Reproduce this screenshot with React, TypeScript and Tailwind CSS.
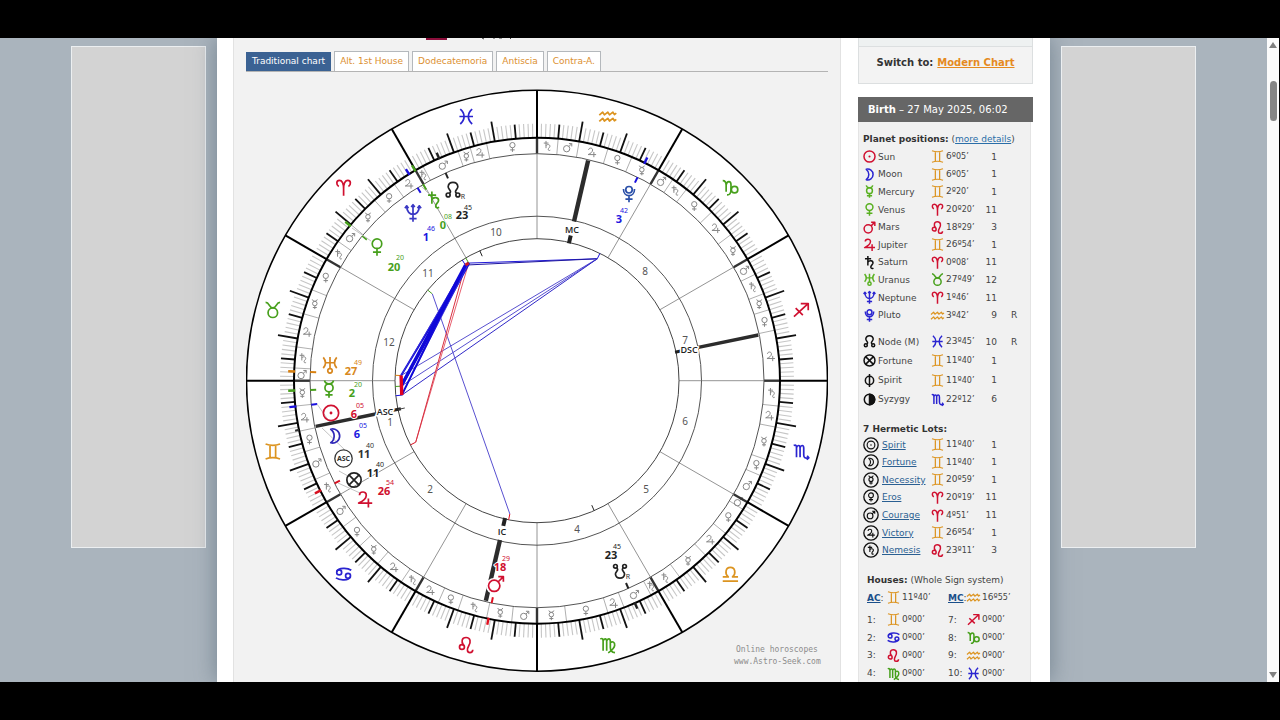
import React from "react";

const RED = "#d01030";
const GREEN = "#47a01c";
const ORANGE = "#dc9420";
const BLUE = "#2a24d0";
const BLACK = "#222222";

type Shape = { d?: string; c?: [number, number, number][]; dots?: [number, number, number][]; fill?: string };

const SHAPES: Record<string, Shape> = {
  sun: { c: [[10, 10, 8.5]], dots: [[10, 10, 1.6]] },
  moon: { d: "M5 2A8.3 8.3 0 1 1 5 18A10 10 0 0 0 5 2Z" },
  mercury: { c: [[10, 8.7, 4.5]], d: "M5 .5Q6 4.2 10 4.2Q14 4.2 15 .5M10 13.2V19.8M6 16.6H14" },
  venus: { c: [[10, 6.3, 5.3]], d: "M10 11.6V19.8M5.5 15.8H14.5" },
  mars: { c: [[8, 12, 6.3]], d: "M12.5 7.5L18 2M12.5 1.8H18.2V7.5" },
  jupiter: { d: "M3.5 5.5C3.5 .8 11.5 .3 11.5 5.5C11.5 9.5 7.5 12.5 2.5 14.8H18.5M14 9.5V20" },
  saturn: { d: "M7.5 0V14.5M3 4.3H12.5M7.5 9.5C9.5 6 15.8 6.5 15.3 11C14.9 13.5 12 14.3 12 17C12 19.2 14 19.8 16 18.5" },
  uranus: { c: [[10, 16.5, 2.5]], d: "M10 1V14M2.5 1.5Q7.5 7.5 2.5 13.5M17.5 1.5Q12.5 7.5 17.5 13.5M5 7.5H15" },
  neptune: { d: "M10 .5V19.8M3 2.5C3 14.5 17 14.5 17 2.5M6 16.2H14M1 4.7L3 2L5 4.7M15 4.7L17 2L19 4.7M8 3.3L10 .8L12 3.3" },
  pluto: { c: [[10, 5, 3.8]], d: "M3.5 4C3.5 14.5 16.5 14.5 16.5 4M10 11.9V19.8M5.8 16H14.2" },
  node: { c: [[4.3, 15.8, 2.3], [15.7, 15.8, 2.3]], d: "M5.8 13.8C9.5 11.5 4 9 4.3 6C4.7 2.5 7.5 1 10 1C12.5 1 15.3 2.5 15.7 6C16 9 10.5 11.5 14.2 13.8" },
  southNode: { c: [[4.3, 4.2, 2.3], [15.7, 4.2, 2.3]], d: "M5.8 6.2C9.5 8.5 4 11 4.3 14C4.7 17.5 7.5 19 10 19C12.5 19 15.3 17.5 15.7 14C16 11 10.5 8.5 14.2 6.2" },
  fortune: { c: [[10, 10, 8.4]], d: "M4 4L16 16M16 4L4 16" },
  spirit: { c: [[10, 10, 6.4]], d: "M10 0V20" },
  syzygy: { c: [[10, 10, 8]], fill: "M10 2A8 8 0 0 1 10 18Z" },
  aries: { d: "M4.3 9C1 7 1.3 1.8 5 1.8C8.5 1.8 10 7 10 12V19.8M15.7 9C19 7 18.7 1.8 15 1.8C11.5 1.8 10 7 10 12" },
  taurus: { c: [[10, 13.3, 5.6]], d: "M1.5 1.2C6.5 1.2 5 7.7 10 7.7C15 7.7 13.5 1.2 18.5 1.2" },
  gemini: { d: "M1.5 1.2Q10 4.2 18.5 1.2M1.5 18.8Q10 15.8 18.5 18.8M6.7 2.7V17.3M13.3 2.7V17.3" },
  cancer: { c: [[4.8, 8, 2.9], [15.2, 12, 2.9]], d: "M1.9 7C4 2.2 14.5 2.2 19 5.5M18.1 13C16 17.8 5.5 17.8 1 14.5" },
  leo: { c: [[5, 12.5, 2.9]], d: "M6.8 10.3C4 6.5 4.5 1.3 9.8 1.3C15.5 1.3 15.5 7 13 11C10.5 15.3 11 19 14.3 19C16.5 19 17.7 17.5 17.7 15.7" },
  virgo: { d: "M1.2 3C4 1.5 4.5 3.5 4.5 6V16.8M4.5 5.5C5.5 2 8.7 2 8.7 6V16.8M8.7 5.5C9.7 2 13 2 13 6V13C13 16.5 14.5 18.7 18.5 19.2M13 7.3C15.5 5.3 18.5 6.8 18.1 10.5C17.5 14.7 13.5 17.3 10.5 19.4" },
  libra: { d: "M1 18.3H19M1 13.3H7.5C3 9.5 4.3 2.2 10 2.2C15.7 2.2 17 9.5 12.5 13.3H19" },
  scorpio: { d: "M1.2 3C4 1.5 4.5 3.5 4.5 6V16.8M4.5 5.5C5.5 2 8.7 2 8.7 6V16.8M8.7 5.5C9.7 2 13 2 13 6V14C13 17.8 15 18.3 18.5 17.7M17 15L19 17.5L16.5 19.7" },
  sagittarius: { d: "M1.5 18L17.8 2.8M9.5 2.5H18.3V10.5M3.5 8L12 16" },
  capricorn: { c: [[14.9, 12.8, 3.8]], d: "M1 2.2C4.5 2.2 5 5 5 8V15.3M5 7C6 2 10.7 2 10.7 7V13C10.7 17.2 9 19.2 6 19" },
  aquarius: { d: "M0 8.5L4 4.8L6 8L10 4.8L12 8L16 4.8L17.8 7.8L20 6M0 15.8L4 12.1L6 15.3L10 12.1L12 15.3L16 12.1L17.8 15.1L20 13.3" },
  pisces: { d: "M3 1.2C9 6.5 9 13.5 3 18.8M17 1.2C11 6.5 11 13.5 17 18.8M2 10H18" },
};

const SIGN_COLORS: Record<string, string> = {
  aries: RED, leo: RED, sagittarius: RED,
  taurus: GREEN, virgo: GREEN, capricorn: GREEN,
  gemini: ORANGE, libra: ORANGE, aquarius: ORANGE,
  cancer: BLUE, scorpio: BLUE, pisces: BLUE,
};

function Strokes({ name, color, width }: { name: string; color: string; width: number }) {
  const s = SHAPES[name];
  return (
    <g stroke={color} strokeWidth={width} fill="none" strokeLinejoin="round">
      {s.c?.map(([x, y, r], i) => <circle key={i} cx={x} cy={y} r={r} />)}
      {s.dots?.map(([x, y, r], i) => <circle key={i} cx={x} cy={y} r={r} fill={color} stroke="none" />)}
      {s.d && <path d={s.d} />}
      {s.fill && <path d={s.fill} fill={color} />}
    </g>
  );
}

function Icon({ name, color }: { name: string; color: string }) {
  return (
    <svg viewBox="0 0 20 20" className="block size-[13px] overflow-visible" aria-hidden="true">
      <Strokes name={name} color={color} width={name === "gemini" || name === "aquarius" ? 1.9 : 2.3} />
    </svg>
  );
}

function RingIcon({ name }: { name: string }) {
  return (
    <svg viewBox="0 0 30 30" className="block size-[16px]" aria-hidden="true">
      <circle cx="15" cy="15" r="13.4" fill="none" stroke="#111" strokeWidth="2.5" />
      <g transform="translate(6.5 6.5) scale(.85)">
        <Strokes name={name} color="#111" width={2.5} />
      </g>
    </svg>
  );
}

/* ---------- chart wheel ---------- */

const CX = 537;
const CY = 380.7;
const R_OUT = 290.5;
const R_SIGN = 243;
const R_TERM = 227;
const R_HOUSE = 164.5;
const R_IN = 142;
const R_ASPECT = 136;

function at(deg: number, r: number): [number, number] {
  const a = (deg * Math.PI) / 180;
  return [CX + r * Math.cos(a), CY - r * Math.sin(a)];
}

function Ray({ deg, from, to, color, width }: { deg: number; from: number; to: number; color: string; width: number }) {
  const [x1, y1] = at(deg, from);
  const [x2, y2] = at(deg, to);
  return <line x1={x1} y1={y1} x2={x2} y2={y2} stroke={color} strokeWidth={width} />;
}

function ChartGlyph({ name, x, y, size, color, width }: { name: string; x: number; y: number; size: number; color: string; width: number }) {
  const k = size / 20;
  return (
    <g transform={`translate(${x - size / 2} ${y - size / 2}) scale(${k})`}>
      <Strokes name={name} color={color} width={width / k} />
    </g>
  );
}

const SIGNS = ["gemini", "cancer", "leo", "virgo", "libra", "scorpio", "sagittarius", "capricorn", "aquarius", "pisces", "aries", "taurus"];

const TERMS: Record<string, [string, number][]> = {
  aries: [["jupiter", 6], ["venus", 12], ["mercury", 20], ["mars", 25], ["saturn", 30]],
  taurus: [["venus", 8], ["mercury", 14], ["jupiter", 22], ["saturn", 27], ["mars", 30]],
  gemini: [["mercury", 6], ["jupiter", 12], ["venus", 17], ["mars", 24], ["saturn", 30]],
  cancer: [["mars", 7], ["venus", 13], ["mercury", 19], ["jupiter", 26], ["saturn", 30]],
  leo: [["jupiter", 6], ["venus", 11], ["saturn", 18], ["mercury", 24], ["mars", 30]],
  virgo: [["mercury", 7], ["venus", 17], ["jupiter", 21], ["mars", 28], ["saturn", 30]],
  libra: [["saturn", 6], ["mercury", 14], ["jupiter", 21], ["venus", 28], ["mars", 30]],
  scorpio: [["mars", 7], ["venus", 11], ["mercury", 19], ["jupiter", 24], ["saturn", 30]],
  sagittarius: [["jupiter", 12], ["venus", 17], ["mercury", 21], ["saturn", 26], ["mars", 30]],
  capricorn: [["mercury", 7], ["jupiter", 14], ["venus", 22], ["saturn", 26], ["mars", 30]],
  aquarius: [["mercury", 7], ["venus", 13], ["jupiter", 20], ["mars", 25], ["saturn", 30]],
  pisces: [["venus", 12], ["jupiter", 16], ["mercury", 19], ["mars", 28], ["saturn", 30]],
};

const POS = { saturn: 120.13, neptune: 121.77, venus: 140.33, uranus: 177.82, mercury: 182.33, sun: 186.08, jupiter: 206.9, mars: 258.48, southNode: 293.75, pluto: 63.7, node: 113.75 };

const ASPECTS: [number, number, string, number][] = [
  [POS.saturn, POS.pluto, "#2018d8", 1],
  [POS.neptune, POS.pluto, "#2018a0", 1],
  [POS.uranus, POS.pluto, "#5850d0", 1],
  [POS.mercury, POS.pluto, "#5850d0", 1],
  [POS.sun, POS.pluto, "#3028c8", 1],
  [POS.venus, POS.mars, "#5850d0", 1],
  [POS.saturn, POS.jupiter, "#e86070", 1],
  [POS.neptune, POS.jupiter, "#d83040", 1],
  [POS.saturn, POS.uranus, "#1008d8", 2],
  [POS.neptune, POS.uranus, "#3830d8", 1],
  [POS.saturn, POS.mercury, "#1008d8", 3],
  [POS.neptune, POS.mercury, "#1008d8", 3],
  [POS.saturn, POS.sun, "#3830d8", 1],
  [POS.neptune, POS.sun, "#1008d8", 2],
  [POS.saturn, POS.neptune, "#c81828", 3],
  [POS.uranus, POS.sun, "#e00020", 3.4],
];

const MARKERS: [number, string][] = [
  [POS.saturn, GREEN], [POS.neptune, "#1a10e0"], [POS.venus, GREEN], [POS.uranus, "#d88010"],
  [POS.mercury, GREEN], [POS.sun, "#1a10e0"], [POS.jupiter, "#d81020"], [POS.mars, "#e01020"],
  [POS.pluto, "#1a10e0"], [POS.node, BLACK], [POS.southNode, BLACK],
];

type Placed = { name: string; x: number; y: number; size: number; color: string; deg: string; dx: number; dy: number; min: string; mx: number; my: number; numColor?: string };

const PLACED: Placed[] = [
  { name: "node", x: 453, y: 190, size: 17, color: BLACK, deg: "23", dx: 462, dy: 219, min: "45", mx: 468, my: 210 },
  { name: "saturn", x: 434, y: 200, size: 17, color: GREEN, deg: "0", dx: 443, dy: 229, min: "08", mx: 448, my: 219 },
  { name: "neptune", x: 413, y: 213, size: 18, color: "#3a38c4", deg: "1", dx: 426, dy: 241, min: "46", mx: 431, my: 231, numColor: "#2018e0" },
  { name: "venus", x: 377, y: 247, size: 18, color: GREEN, deg: "20", dx: 394, dy: 271, min: "20", mx: 400, my: 260 },
  { name: "pluto", x: 629, y: 194, size: 17, color: "#2a4fa8", deg: "3", dx: 619, dy: 223, min: "42", mx: 624, my: 213, numColor: "#2018e0" },
  { name: "uranus", x: 330, y: 365, size: 18, color: "#d88820", deg: "27", dx: 351, dy: 375, min: "49", mx: 358, my: 365 },
  { name: "mercury", x: 329, y: 389, size: 18, color: GREEN, deg: "2", dx: 352, dy: 397, min: "20", mx: 358, my: 387 },
  { name: "sun", x: 331, y: 413, size: 18, color: RED, deg: "6", dx: 354, dy: 418, min: "05", mx: 360, my: 408 },
  { name: "moon", x: 335, y: 436, size: 17, color: "#3028b8", deg: "6", dx: 357, dy: 438, min: "05", mx: 363, my: 428, numColor: "#2018e0" },
  { name: "fortune", x: 354, y: 480, size: 17, color: BLACK, deg: "11", dx: 373, dy: 477, min: "40", mx: 380, my: 467 },
  { name: "jupiter", x: 365, y: 499, size: 17, color: RED, deg: "26", dx: 384, dy: 495, min: "54", mx: 390, my: 485 },
  { name: "mars", x: 496, y: 584, size: 18, color: RED, deg: "18", dx: 500, dy: 571, min: "29", mx: 506, my: 561 },
  { name: "southNode", x: 620, y: 571, size: 16, color: BLACK, deg: "23", dx: 611, dy: 559, min: "45", mx: 617, my: 549 },
];

const HOUSES: [string, number, number][] = [
  ["10", 496, 236], ["11", 428, 277], ["12", 389, 346], ["1", 390, 426], ["2", 430, 493],
  ["4", 577, 533], ["5", 646, 493], ["6", 685, 425], ["7", 685, 344], ["8", 645, 275],
];

const AXES: { label: string; deg: number; x: number; y: number }[] = [
  { label: "ASC", deg: 191.67, x: 385, y: 415 },
  { label: "DSC", deg: 11.67, x: 689, y: 353 },
  { label: "MC", deg: 76.92, x: 572, y: 233 },
  { label: "IC", deg: 256.92, x: 502, y: 535 },
];

function Wheel() {
  const degrees = Array.from({ length: 360 }, (_, i) => i);
  return (
    <svg viewBox="246 72 582 610" className="block w-full" role="img" aria-label="Traditional birth chart">
      <circle cx={CX} cy={CY} r={R_OUT} fill="#fff" />
      {degrees.filter((d) => d % 5 !== 0).map((d) => (
        <Ray key={d} deg={d} from={R_SIGN} to={257} color="#c6c6c6" width={1.1} />
      ))}
      {degrees.filter((d) => d % 5 === 0 && d % 30 !== 0).map((d) => (
        <Ray key={d} deg={d} from={R_SIGN} to={d % 10 === 0 ? 263 : 257} color="#111" width={1.8} />
      ))}
      {SIGNS.map((sign, i) => {
        const start = 180 + i * 30;
        const [gx, gy] = at(start + 15, 273.5);
        return (
          <g key={sign}>
            <Ray deg={start} from={R_SIGN} to={R_OUT} color="#000" width={2} />
            <Ray deg={start} from={R_TERM} to={R_SIGN} color="#333" width={2.4} />
            <Ray deg={start} from={R_IN} to={R_TERM} color="#949494" width={1} />
            <ChartGlyph name={sign} x={gx} y={gy} size={17} color={SIGN_COLORS[sign]} width={1.7} />
            {TERMS[sign].map(([ruler, end], j) => {
              const begin = j === 0 ? 0 : TERMS[sign][j - 1][1];
              const [tx, ty] = at(start + (begin + end) / 2, 235);
              return (
                <g key={j}>
                  {end < 30 && <Ray deg={start + end} from={R_TERM} to={R_SIGN} color="#b0b0b0" width={1} />}
                  <ChartGlyph name={ruler} x={tx} y={ty} size={10} color="#868686" width={1} />
                </g>
              );
            })}
          </g>
        );
      })}
      <g fill="none">
        <circle cx={CX} cy={CY} r={R_OUT} stroke="#000" strokeWidth={1.6} />
        <circle cx={CX} cy={CY} r={R_SIGN} stroke="#000" strokeWidth={2} />
        <circle cx={CX} cy={CY} r={R_TERM} stroke="#555" />
        <circle cx={CX} cy={CY} r={R_HOUSE} stroke="#555" />
        <circle cx={CX} cy={CY} r={R_IN} stroke="#444" />
      </g>

      {MARKERS.map(([deg, color]) => (
        <g key={deg}>
          <Ray deg={deg} from={R_SIGN - 1} to={249} color={color} width={2.4} />
          <Ray deg={deg} from={221} to={R_TERM} color={color} width={2} />
          <Ray deg={deg} from={R_ASPECT} to={R_IN} color={color} width={1} />
        </g>
      ))}
      <Ray deg={191.67} from={R_SIGN} to={247} color="#333" width={2} />

      {ASPECTS.map(([a, b, color, w], i) => {
        const [x1, y1] = at(a, R_ASPECT);
        const [x2, y2] = at(b, R_ASPECT);
        return <line key={i} x1={x1} y1={y1} x2={x2} y2={y2} stroke={color} strokeWidth={w} />;
      })}

      <g stroke="#c4c4c4" strokeWidth="1">
        <path d="M317 404L331 424M322 428L345 450M339 471L348 476M338 483L360 493M352 228L371 241M421 186L429 194" />
      </g>

      {AXES.map(({ label, deg, x, y }) => (
        <g key={label}>
          <Ray deg={deg} from={R_HOUSE - 1} to={R_TERM - 1} color="#2c2c2c" width={label.endsWith("SC") ? 3.4 : 4.4} />
          <Ray deg={deg} from={label === "ASC" ? 139 : R_IN - 1} to={149} color="#222" width={label.endsWith("SC") ? 3 : 4} />
          <text x={x} y={y} textAnchor="middle" fill="#222" stroke="#fff" strokeWidth="3" paintOrder="stroke" className="font-['Open_Sans','Noto_Sans',sans-serif] text-[9px] font-semibold">
            {label}
          </text>
        </g>
      ))}
      <Ray deg={191.67} from={135} to={142} color="#444" width={1} />

      <g className="font-['Noto_Sans',sans-serif] text-[10px]" fill="#555" textAnchor="middle">
        {HOUSES.map(([n, x, y]) => <text key={n} x={x} y={y}>{n}</text>)}
      </g>

      {PLACED.map((p) => (
        <g key={p.name}>
          {p.name === "mars" && <circle cx="494" cy="586" r="8" fill="#fff" />}
          <ChartGlyph name={p.name} x={p.x} y={p.y} size={p.size} color={p.color} width={1.7} />
          <g fill={p.numColor ?? p.color} stroke="#fff" strokeWidth="2" paintOrder="stroke" textAnchor="middle" className="font-['Noto_Sans',sans-serif]">
            <text x={p.dx} y={p.dy} className="text-[11px] font-bold">{p.deg}</text>
            <text x={p.mx} y={p.my} className="text-[7px]">{p.min}</text>
          </g>
        </g>
      ))}
      <g textAnchor="middle" fill="#333" className="font-['Noto_Sans',sans-serif]">
        <circle cx="343.5" cy="458.5" r="8.7" fill="#fff" stroke="#333" strokeWidth="1.3" />
        <text x="343.5" y="461" className="text-[7px] font-bold">ASC</text>
        <text x="364" y="458" className="text-[11px] font-bold">11</text>
        <text x="370" y="448" className="text-[7px]">40</text>
        <text x="463" y="199" className="text-[7px]">R</text>
        <text x="628" y="579" className="text-[7px]">R</text>
      </g>

      <g fill="#8c8c8c" className="font-['DejaVu_Sans_Mono',monospace] text-[8px]">
        <text x="736" y="652">Online horoscopes</text>
        <text x="734" y="664">www.Astro-Seek.com</text>
      </g>
    </svg>
  );
}

/* ---------- sidebar ---------- */

type Row = [icon: string, color: string, name: string, sign: string, deg: string, min: string, house: string, retro?: string];

const PLANETS: Row[] = [
  ["sun", RED, "Sun", "gemini", "6", "05", "1"],
  ["moon", BLUE, "Moon", "gemini", "6", "05", "1"],
  ["mercury", "#58b020", "Mercury", "gemini", "2", "20", "1"],
  ["venus", "#58b020", "Venus", "aries", "20", "20", "11"],
  ["mars", RED, "Mars", "leo", "18", "29", "3"],
  ["jupiter", RED, "Jupiter", "gemini", "26", "54", "1"],
  ["saturn", "#111", "Saturn", "aries", "0", "08", "11"],
  ["uranus", "#58b020", "Uranus", "taurus", "27", "49", "12"],
  ["neptune", BLUE, "Neptune", "aries", "1", "46", "11"],
  ["pluto", BLUE, "Pluto", "aquarius", "3", "42", "9", "R"],
];

const POINTS: Row[] = [
  ["node", "#111", "Node (M)", "pisces", "23", "45", "10", "R"],
  ["fortune", "#111", "Fortune", "gemini", "11", "40", "1"],
  ["spirit", "#111", "Spirit", "gemini", "11", "40", "1"],
  ["syzygy", "#111", "Syzygy", "scorpio", "22", "12", "6"],
];

const LOTS: Row[] = [
  ["sun", "#111", "Spirit", "gemini", "11", "40", "1"],
  ["moon", "#111", "Fortune", "gemini", "11", "40", "1"],
  ["mercury", "#111", "Necessity", "gemini", "20", "59", "1"],
  ["venus", "#111", "Eros", "aries", "20", "19", "11"],
  ["mars", "#111", "Courage", "aries", "4", "51", "11"],
  ["jupiter", "#111", "Victory", "gemini", "26", "54", "1"],
  ["saturn", "#111", "Nemesis", "leo", "23", "11", "3"],
];

type Cusp = { label: string; link?: boolean; sign: string; deg: string; min: string };

const ANGLES: Cusp[][] = [
  [
    { label: "AC", link: true, sign: "gemini", deg: "11", min: "40" },
    { label: "MC", link: true, sign: "aquarius", deg: "16", min: "55" },
  ],
];

const cusp = (label: string, sign: string): Cusp => ({ label, sign, deg: "0", min: "00" });

const CUSPS: Cusp[][] = [
  [cusp("1", "gemini"), cusp("7", "sagittarius")],
  [cusp("2", "cancer"), cusp("8", "capricorn")],
  [cusp("3", "leo"), cusp("9", "aquarius")],
  [cusp("4", "virgo"), cusp("10", "pisces")],
];

function Degree({ deg, min }: { deg: string; min: string }) {
  return <>{deg}º<span className="text-[8px]">{min}’</span></>;
}

function Positions({ rows, height, lots = false }: { rows: Row[]; height: string; lots?: boolean }) {
  return (
    <table className={`w-full table-fixed border-collapse ${height}`}>
      <colgroup>
        <col className={lots ? "w-[19px]" : "w-[15px]"} />
        <col className={lots ? "w-[49px]" : "w-[53px]"} />
        <col className="w-[15px]" />
        <col className="w-[34px]" />
        <col className="w-[17px]" />
        <col />
      </colgroup>
      <tbody>
        {rows.map(([icon, color, name, sign, deg, min, house, retro]) => (
          <tr key={name}>
            <td>{lots ? <RingIcon name={icon} /> : <Icon name={icon} color={color} />}</td>
            <td className="whitespace-nowrap">
              {lots ? <a href={`#${name}`} className="text-[#2a5f92] underline">{name}</a> : name}
            </td>
            <td><Icon name={sign} color={SIGN_COLORS[sign]} /></td>
            <td className="whitespace-nowrap"><Degree deg={deg} min={min} /></td>
            <td className="text-right">{house}</td>
            <td className="pl-[14px]">{retro}</td>
          </tr>
        ))}
      </tbody>
    </table>
  );
}

function CuspTable({ rows, height }: { rows: Cusp[][]; height: string }) {
  return (
    <table className={`ml-[4px] w-[150px] table-fixed border-collapse ${height}`}>
      <colgroup>
        <col className="w-[20px]" />
        <col className="w-[15px]" />
        <col className="w-[46px]" />
        <col className="w-[19px]" />
        <col className="w-[15px]" />
        <col />
      </colgroup>
      <tbody>
        {rows.map((pair) => (
          <tr key={pair[0].label}>
            {pair.map((c) => (
              <React.Fragment key={c.label}>
                <td className="whitespace-nowrap">
                  {c.link ? <a href={`#${c.label}`} className="font-bold text-[#1a4f8a] underline">{c.label}</a> : c.label}:
                </td>
                <td><Icon name={c.sign} color={SIGN_COLORS[c.sign]} /></td>
                <td><Degree deg={c.deg} min={c.min} /></td>
              </React.Fragment>
            ))}
          </tr>
        ))}
      </tbody>
    </table>
  );
}

function Sidebar() {
  return (
    <aside className="w-[175px] shrink-0">
      <div className="border border-t-0 border-[#dcdfe0] bg-[#f3f3f3]">
        <div className="h-[9px] border-b border-[#dcdfe0] bg-[#eef1f1]" />
        <p className="flex h-[36px] items-center justify-center gap-1 pb-[5px] text-[10px] font-bold text-[#333]">
          Switch to:
          <a href="#modern" className="text-[#e58a1f] underline">Modern Chart</a>
        </p>
      </div>
      <section className="mt-[13px]">
        <h2 className="flex h-[25px] items-center bg-[#666] px-[10px] text-[10px] whitespace-pre text-white">
          <b>Birth</b> – 27 May 2025, 06:02
        </h2>
        <div className="mr-[2px] border-x border-[#e4e4e4] bg-[#f1f1f1] pt-[10px] pl-[4px] text-[9px] leading-[14px] text-[#444]">
          <h3 className="whitespace-nowrap">
            <b className="text-[#333]">Planet positions:</b> (<a href="#details" className="text-[#2a6ea8] underline">more details</a>)
          </h3>
          <div className="pt-[2px]"><Positions rows={PLANETS} height="h-[176px]" /></div>
          <div className="pt-[8px]"><Positions rows={POINTS} height="h-[77px]" /></div>
          <h3 className="pt-[13px] font-bold text-[#333]">7 Hermetic Lots:</h3>
          <Positions rows={LOTS} height="h-[123px]" lots />
          <h3 className="pt-[14px] pl-[4px] whitespace-nowrap"><b className="text-[#333]">Houses:</b> (Whole Sign system)</h3>
          <CuspTable rows={ANGLES} height="h-[21px]" />
          <div className="pt-[3px]"><CuspTable rows={CUSPS} height="h-[71px]" /></div>
        </div>
      </section>
    </aside>
  );
}

const TABS = ["Alt. 1st House", "Dodecatemoria", "Antiscia", "Contra-A."];

function Tabs() {
  return (
    <nav className="flex h-[21px] items-end gap-[3px] border-b border-[#b4b4b4] text-[9px] whitespace-nowrap">
      <button className="h-[19px] bg-[#3b6293] px-[6px] text-white">Traditional chart</button>
      {TABS.map((t) => (
        <button key={t} className="h-[20px] border border-b-0 border-[#b4b8bc] bg-white px-[5px] text-[#dc8f30]">{t}</button>
      ))}
    </nav>
  );
}

function SideBanner() {
  return <div className="mt-[8px] h-[502px] w-[135px] shrink-0 border border-[#eceff1] bg-[#d3d3d3]" />;
}

export default function App() {
  return (
    <div className="h-screen bg-black py-[38px] font-['DejaVu_Sans',Verdana,sans-serif]">
      <div className="flex h-full overflow-hidden pr-px">
        <div className="flex min-w-0 flex-1 items-start justify-center gap-[11px] overflow-hidden bg-[#aab4bd]">
          <SideBanner />
          <div className="flex w-[833px] shrink-0 justify-between bg-white pr-[17px] pl-[16px] shadow-[0_0_22px_rgba(70,90,105,0.55)]">
            <main className="w-[608px] shrink-0 border-x border-[#e2e2e2] bg-[#f2f2f2] px-[12px]">
              <svg viewBox="0 0 582 13" className="block w-full" aria-hidden="true">
                <path d="M180 0H201V2H180Z" fill="#8c0f3c" />
                <path d="M236 0L238 1M248 0V1M253 0H256M265 0L264 1" stroke="#444" fill="none" />
              </svg>
              <Tabs />
              <Wheel />
            </main>
            <Sidebar />
          </div>
          <SideBanner />
        </div>
        <div className="flex w-[12px] shrink-0 flex-col items-center justify-between bg-[#fbfbfb] py-[4px]">
          <div className="flex flex-col items-center gap-[33px]">
            <svg viewBox="0 0 8 6" className="h-[6px] w-[8px]" aria-hidden="true"><path d="M4 0L8 6H0Z" fill="#808080" /></svg>
            <div className="h-[40px] w-[7px] rounded-full bg-[#858585]" />
          </div>
          <svg viewBox="0 0 8 6" className="h-[6px] w-[8px]" aria-hidden="true"><path d="M4 6L8 0H0Z" fill="#808080" /></svg>
        </div>
      </div>
    </div>
  );
}
